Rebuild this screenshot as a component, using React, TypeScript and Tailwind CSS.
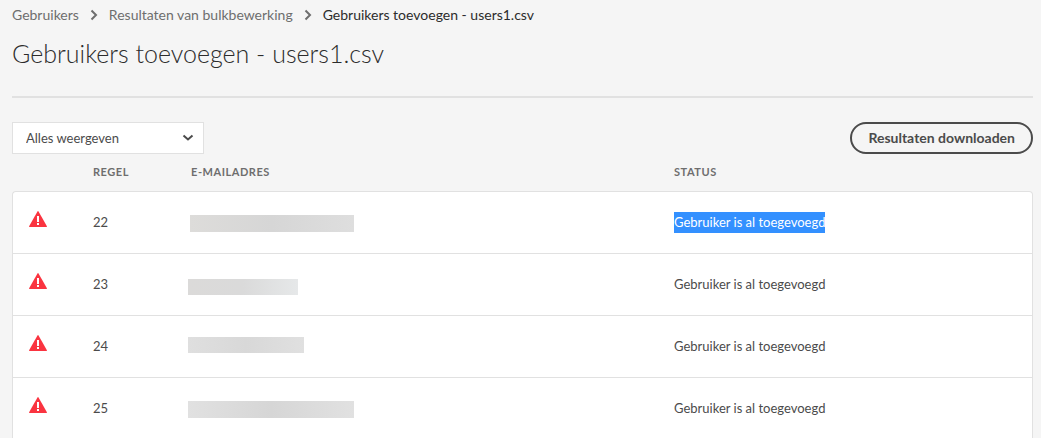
import { Fragment } from 'react'

interface ResultRow {
  line: number
  /** Classes of the greyed out e-mail address */
  mask: string
  selected?: boolean
}

const crumbs = ['Gebruikers', 'Resultaten van bulkbewerking']

const rows: ResultRow[] = [
  {
    line: 22,
    mask: 'ml-0.5 mt-0.5 w-41 h-[17px] from-[#dddcda] via-[#d6d6d6] to-[#dedede]',
    selected: true,
  },
  { line: 23, mask: 'mt-1 w-[110px] h-4 from-[#dbdad9] via-[#dadada] to-[#e6e8e9]' },
  { line: 24, mask: '-mt-1 w-[116px] h-4 from-[#dfdfdf] via-[#d8d8d8] to-[#e0e0e0]' },
  { line: 25, mask: 'mt-0.5 w-[166px] h-[17px] from-[#e1e1e1] via-[#d6d6d6] to-[#e1e1e1]' },
]

function CrumbChevron() {
  return (
    <svg
      width="8"
      height="12"
      viewBox="0 0 8 12"
      fill="none"
      stroke="#6e6e6e"
      strokeWidth="2"
      aria-hidden="true"
    >
      <path d="M1.5 1.5 6 6l-4.5 4.5" />
    </svg>
  )
}

function AlertIcon() {
  return (
    <svg
      width="18"
      height="16"
      viewBox="0 0 18 16"
      role="img"
      aria-label="Fout"
      className="mb-2"
    >
      <path
        fill="#fa3440"
        d="M8.6.3a.5.5 0 0 1 .8 0l8.5 15a.5.5 0 0 1-.4.7H.5a.5.5 0 0 1-.4-.7z"
      />
      <path fill="#fff" d="M8 5h2v6H8zM8 12h2v2H8z" />
    </svg>
  )
}

export default function App() {
  return (
    <main className="h-screen overflow-hidden bg-[#f5f5f5] pl-3 pr-2 pt-1 font-['Lato',sans-serif] text-[13px] leading-[21px] text-[#4b4b4b]">
      <nav
        aria-label="Kruimelpad"
        className="flex items-center gap-[11px] text-sm leading-[21px] text-[#6e6e6e]"
      >
        {crumbs.map((crumb) => (
          <Fragment key={crumb}>
            <a href="#">{crumb}</a>
            <CrumbChevron />
          </Fragment>
        ))}
        <span aria-current="page" className="text-[#2c2c2c]">
          Gebruikers toevoegen - users1.csv
        </span>
      </nav>

      <h1 className="mt-3 text-[25px] font-light leading-8 text-[#2c2c2c]">
        Gebruikers toevoegen - users1.csv
      </h1>
      <hr className="mt-[27px] border-t-2 border-[#e1e1e1]" />

      <div className="mt-6 flex items-center justify-between">
        <div className="grid w-48 items-center">
          <select
            aria-label="Weergave"
            className="col-start-1 row-start-1 h-8 appearance-none border border-[#e1e1e1] bg-white pl-[13px] pr-8"
          >
            <option>Alles weergeven</option>
          </select>
          <svg
            width="12"
            height="8"
            viewBox="0 0 12 8"
            fill="none"
            stroke="#4b4b4b"
            strokeWidth="2"
            aria-hidden="true"
            className="pointer-events-none col-start-1 row-start-1 mr-2.5 justify-self-end"
          >
            <path d="m1.5 1.5 4.5 4 4.5-4" />
          </svg>
        </div>
        <button
          type="button"
          className="h-8 rounded-full border-2 border-[#4b4b4b] px-4 text-sm leading-5 font-bold"
        >
          Resultaten downloaden
        </button>
      </div>

      <table className="w-full table-fixed border-separate border-spacing-0 text-left">
        <colgroup>
          <col className="w-[81px]" />
          <col className="w-[95px]" />
          <col />
          <col className="w-[359px]" />
        </colgroup>
        <thead>
          <tr className="h-[37px] text-[11px] tracking-wider text-[#6e6e6e] [&>th]:pb-0.5 [&>th]:font-bold">
            <td />
            <th>REGEL</th>
            <th className="pl-[3px]">E-MAILADRES</th>
            <th>STATUS</th>
          </tr>
        </thead>
        <tbody className="[&_td]:border-b [&_td]:border-[#e1e1e1] [&_td]:bg-white [&_td:first-child]:border-l [&_td:last-child]:border-r [&_tr:first-child_td]:border-t [&_tr:first-child_td:first-child]:rounded-tl [&_tr:first-child_td:last-child]:rounded-tr">
          {rows.map(({ line, mask, selected }) => (
            <tr key={line} className="h-[62px] first:h-[63px]">
              <td className="pl-4">
                <AlertIcon />
              </td>
              <td>{line}</td>
              <td>
                <div className={`bg-linear-to-r ${mask}`} />
              </td>
              <td>
                <span className={selected ? 'inline-block bg-[#3390ff] text-white' : ''}>
                  Gebruiker is al toegevoegd
                </span>
              </td>
            </tr>
          ))}
        </tbody>
      </table>
    </main>
  )
}
